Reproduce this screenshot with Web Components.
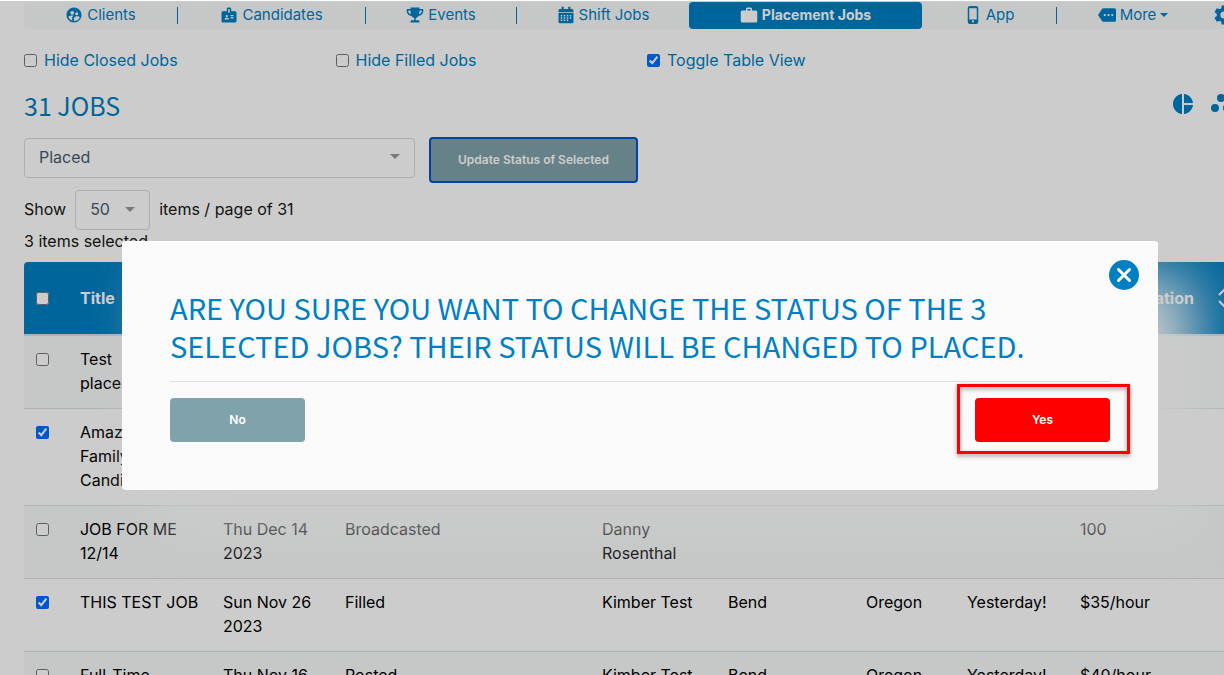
<!DOCTYPE html>
<html lang="en">
<head>
<meta charset="utf-8">
<title>Placement Jobs</title>
<style>
  body {
    margin: 0;
    height: 100vh;
    overflow: hidden;
    background: #fff;
    color: #161616;
    font: 16px/24px Inter, "Open Sans", sans-serif;
    --blue: #007fc2;
    --stripe: #f8fafb;
    --line: #dbdfe3;
    --heading: "Noto Sans CJK SC", "Noto Sans", sans-serif;
  }
</style>
</head>
<body>
<jobs-page>
  <main-nav slot="nav">
    <nav-tab icon="clients" style="--w: 154">Clients</nav-tab>
    <nav-tab icon="badge" style="--w: 188">Candidates</nav-tab>
    <nav-tab icon="trophy" style="--w: 151">Events</nav-tab>
    <nav-tab icon="calendar" plain style="--w: 172">Shift Jobs</nav-tab>
    <nav-tab icon="work" active plain style="--w: 233">Placement Jobs</nav-tab>
    <nav-tab icon="phone" style="--w: 135">App</nav-tab>
    <nav-tab icon="more" plain menu style="--w: 152">More</nav-tab>
    <nav-tab icon="gear" plain large label="Settings" style="--w: 47"></nav-tab>
  </main-nav>
  <check-option slot="filters">Hide Closed Jobs</check-option>
  <check-option slot="filters">Hide Filled Jobs</check-option>
  <check-option slot="filters" checked>Toggle Table View</check-option>
  <jobs-table></jobs-table>
</jobs-page>
<confirm-modal>
  Are you sure you want to change the status of the 3 selected jobs? Their status will be changed to Placed.
</confirm-modal>

<script>
const ICONS = {
  clients: '<path fill-rule="evenodd" d="M12 2C6.500 2 2 6.500 2 12s4.500 10 10 10 10-4.500 10-10S17.500 2 12 2zm3.600 6.300a2 2 0 1 1 0 4 2 2 0 0 1 0-4zM9.600 6.700a2.400 2.400 0 1 1 0 4.900 2.400 2.400 0 0 1 0-4.900zm0 9.200v3.800a8 8 0 0 1-5.200-5.200c1.100-1.200 3.900-1.800 5.200-1.800.5 0 1.100.1 1.700.2-1.500.8-1.700 1.800-1.700 3zM12 20v-4.100c0-1.400 2.900-2.100 4.400-2.100 1.100 0 2.900.4 3.300 1.100A8 8 0 0 1 12 20z"/>',
  badge: '<path fill-rule="evenodd" d="M20 7h-5V4c0-1.100-.9-2-2-2h-2c-1.100 0-2 .9-2 2v3H4c-1.100 0-2 .9-2 2v11c0 1.100.9 2 2 2h16c1.100 0 2-.9 2-2V9c0-1.100-.9-2-2-2zM9 12a1.500 1.500 0 1 1 0 3 1.500 1.500 0 0 1 0-3zm3 6H6v-.7c0-1 2-1.500 3-1.500s3 .5 3 1.500V18zm1-9h-2V4h2v5zm5 7.500h-4V15h4v1.500zm0-3h-4V12h4v1.500z"/>',
  trophy: '<path fill-rule="evenodd" d="M6 2v2H1v3c0 3.500 3 6 6.300 6.200A6 6 0 0 0 11 16v3H8c-1.200 0-2 .8-2 2v1h12v-1c0-1.200-.8-2-2-2h-3v-3a6 6 0 0 0 3.700-2.800C20 13 23 10.500 23 7V4h-5V2H6zM3 6h3c0 2 .2 3.700.6 4.900C4.500 10.300 3 8.800 3 7V6zm15 0h3v1c0 1.800-1.500 3.300-3.600 3.900.4-1.200.6-2.900.6-4.900z"/>',
  calendar: '<path fill-rule="evenodd" d="M6 1h3v3h6V1h3v3h2a2 2 0 0 1 2 2v2H2V6c0-1.100.9-2 2-2h2V1zM2 9h20v12a2 2 0 0 1-2 2H4a2 2 0 0 1-2-2V9zm3 3v2h2v-2H5zm4 0v2h2v-2H9zm4 0v2h2v-2h-2zm4 0v2h2v-2h-2zM5 15v2h2v-2H5zm4 0v2h2v-2H9zm4 0v2h2v-2h-2zm4 0v2h2v-2h-2zM5 18v2h2v-2H5zm4 0v2h2v-2H9zm4 0v2h2v-2h-2z"/>',
  work: '<path fill-rule="evenodd" d="M21 6h-5V4a2 2 0 0 0-2-2h-4a2 2 0 0 0-2 2v2H3a2 2 0 0 0-2 2v12c0 1.100.9 2 2 2h18a2 2 0 0 0 2-2V8a2 2 0 0 0-2-2zm-7 0h-4V4h4v2z"/>',
  phone: '<path fill-rule="evenodd" d="M8 0h8a3 3 0 0 1 3 3v18a3 3 0 0 1-3 3H8a3 3 0 0 1-3-3V3a3 3 0 0 1 3-3zM7 3v15h10V3H7zm5 16a1.300 1.300 0 1 0 0 3 1.300 1.300 0 0 0 0-3z"/>',
  more: '<path fill-rule="evenodd" d="M22 3H7c-.7 0-1.200.4-1.600.9L0 12l5.400 8.100c.4.500.9.900 1.600.900h15a2 2 0 0 0 2-2V5a2 2 0 0 0-2-2zM9 10.500a1.500 1.500 0 1 1 0 3 1.500 1.500 0 0 1 0-3zm5 0a1.500 1.500 0 1 1 0 3 1.500 1.500 0 0 1 0-3zm5 0a1.500 1.500 0 1 1 0 3 1.500 1.500 0 0 1 0-3z"/>',
  gear: '<path d="M19.140 12.940c.04-.3.06-.61.06-.94s-.02-.64-.07-.94l2.030-1.580a.49.49 0 0 0 .12-.61l-1.920-3.320a.49.49 0 0 0-.59-.22l-2.390.96c-.5-.38-1.030-.7-1.620-.94l-.36-2.540a.48.48 0 0 0-.48-.41h-3.840c-.24 0-.43.17-.47.41l-.36 2.540c-.59.24-1.130.57-1.620.94l-2.390-.96a.48.48 0 0 0-.59.22L2.740 8.870a.47.47 0 0 0 .12.61l2.030 1.580c-.05.3-.09.63-.09.94s.02.64.07.94l-2.030 1.580a.49.49 0 0 0-.12.61l1.920 3.320c.12.22.37.29.59.22l2.390-.96c.5.38 1.030.7 1.620.94l.36 2.540c.05.24.24.41.48.41h3.840c.24 0 .44-.17.47-.41l.36-2.540c.59-.24 1.130-.56 1.620-.94l2.390.96c.22.08.47 0 .59-.22l1.920-3.320a.47.47 0 0 0-.12-.61l-2.010-1.580zM12 15.600a3.600 3.600 0 1 1 0-7.200 3.600 3.600 0 0 1 0 7.200z"/>',
  pie: '<path d="M11 2v20C5.900 21.500 2 17.200 2 12s3.900-9.500 9-10zm2 0v9h9c-.5-4.700-4.200-8.500-9-9zm0 11v9c4.700-.5 8.500-4.200 9-9h-9z"/>',
  bubbles: '<circle cx="6" cy="16" r="4"/><circle cx="12" cy="6" r="4"/><circle cx="18" cy="16" r="4"/>'
};

const icon = (name, size) =>
  `<svg viewBox="0 0 24 24" width="${size}" height="${size}" fill="currentColor" aria-hidden="true">${ICONS[name]}</svg>`;

// tick boxes look the same everywhere
const CHECKBOX = `
  input[type="checkbox"] {
    width: 13px;
    height: 13px;
    margin: 0;
    flex: none;
    accent-color: #006cff;
  }
`;

class MainNav extends HTMLElement {
  connectedCallback() {
    this.attachShadow({ mode: 'open' });
    this.shadowRoot.innerHTML = `
      <style>
        :host { display: block; }
        nav {
          display: flex;
          height: 27px;
          background: var(--stripe);
          border-radius: 4px;
        }
      </style>
      <nav><slot></slot></nav>
    `;
  }
}

class NavTab extends HTMLElement {
  connectedCallback() {
    const large = this.hasAttribute('large');
    const label = this.getAttribute('label');
    this.attachShadow({ mode: 'open' });
    this.shadowRoot.innerHTML = `
      <style>
        :host {
          display: flex;
          flex: var(--w) 1 0;
          min-width: 0;
          align-items: center;
          font-size: 15px;
          color: var(--blue);
        }
        :host(:not([plain]))::after {
          content: "";
          width: 1px;
          height: 17px;
          background: currentColor;
        }
        :host([active]) {
          background: var(--blue);
          color: #fff;
          border-radius: 4px;
          font-size: 14px;
          font-weight: 700;
        }
        a {
          flex: 1;
          display: flex;
          justify-content: center;
          align-items: center;
          gap: 4px;
          padding-bottom: 1px;
          color: inherit;
          text-decoration: none;
          white-space: nowrap;
        }
        :host([large]) a { justify-content: flex-start; padding-left: 3px; }
        svg { flex: none; }
        .caret {
          border: 4px solid transparent;
          border-top-color: currentColor;
          border-bottom: 0;
        }
      </style>
      <a href="#" ${label ? `aria-label="${label}"` : ''}>
        ${icon(this.getAttribute('icon'), large ? 24 : 18)}
        <slot></slot>
        ${this.hasAttribute('menu') ? '<span class="caret"></span>' : ''}
      </a>
    `;
  }
}

class CheckOption extends HTMLElement {
  connectedCallback() {
    this.attachShadow({ mode: 'open' });
    this.shadowRoot.innerHTML = `
      <style>
        :host { display: block; color: var(--blue); }
        label { display: flex; align-items: center; gap: 7px; }
        ${CHECKBOX}
      </style>
      <label>
        <input type="checkbox" ${this.hasAttribute('checked') ? 'checked' : ''}>
        <span><slot></slot></span>
      </label>
    `;
  }
}

class SelectBox extends HTMLElement {
  connectedCallback() {
    this.attachShadow({ mode: 'open' });
    this.shadowRoot.innerHTML = `
      <style>
        :host { display: block; position: relative; }
        select {
          appearance: none;
          display: block;
          width: 100%;
          height: 40px;
          padding: 0 32px 3px 14px;
          border: 1px solid #dadada;
          border-radius: 4px;
          background: transparent;
          color: #4a5b70;
          font: inherit;
        }
        .caret {
          position: absolute;
          right: 15px;
          top: 17px;
          border: 5px solid transparent;
          border-top-color: #999;
          border-bottom: 0;
          pointer-events: none;
        }
      </style>
      <select aria-label="${this.getAttribute('label')}">
        <option>${this.getAttribute('value')}</option>
      </select>
      <span class="caret"></span>
    `;
  }
}

class JobsPage extends HTMLElement {
  connectedCallback() {
    this.attachShadow({ mode: 'open' });
    this.shadowRoot.innerHTML = `
      <style>
        /* the page is wider than the window and runs off its right side */
        :host {
          display: block;
          box-sizing: border-box;
          width: calc(100% + 56px);
          padding: 2px 24px 0;
        }
        .filters {
          display: grid;
          grid-template-columns: repeat(4, 1fr);
          gap: 14px;
          margin-top: 19px;
        }
        .heading {
          display: flex;
          justify-content: space-between;
          align-items: flex-start;
          height: 32px;
          margin-top: 17px;
          color: var(--blue);
        }
        h2 {
          margin: 0;
          font: 400 25px/32px var(--heading);
          text-transform: uppercase;
        }
        .tools { display: flex; gap: 14px; margin: 3px 23px 0 0; }
        .tools button {
          display: block;
          padding: 0;
          border: 0;
          background: none;
          color: inherit;
        }
        .tools svg { display: block; }
        .actions {
          display: flex;
          align-items: flex-start;
          gap: 14px;
          margin-top: 16px;
        }
        .status { flex: 0 1 391px; padding-top: 1px; }
        .update {
          height: 46px;
          padding: 0 27px;
          border: 2px solid #0055cc;
          border-radius: 4px;
          background: #80a2aa;
          color: #fff;
          font: 600 12px/24px Inter, sans-serif;
        }
        .paging {
          display: flex;
          align-items: center;
          gap: 9px;
          margin-top: 7px;
        }
        .size { width: 75px; }
        .paging span { padding-bottom: 2px; }
        p { margin: 0 0 10px; line-height: 22px; }
      </style>
      <slot name="nav"></slot>
      <div class="filters"><slot name="filters"></slot></div>
      <div class="heading">
        <h2>31 Jobs</h2>
        <div class="tools">
          <button type="button" aria-label="Chart">${icon('pie', 24)}</button>
          <button type="button" aria-label="Groups">${icon('bubbles', 24)}</button>
        </div>
      </div>
      <div class="actions">
        <select-box class="status" label="Status" value="Placed"></select-box>
        <button type="button" class="update">Update Status of Selected</button>
      </div>
      <div class="paging">
        <span>Show</span>
        <select-box class="size" label="Items per page" value="50"></select-box>
        <span>items / page of 31</span>
      </div>
      <p>3 items selected</p>
      <slot></slot>
    `;
  }
}

const WIDTHS = [44, 143, 122, 257, 126, 138, 101, 113, 188];

const JOBS = [
  [false, 'Test<br>placement', '', '', '', '', '', '', ''],
  [true, 'Amazing<br>Family<br>Candidate', '', '', '', '', '', '', ''],
  [false, 'JOB FOR ME<br>12/14', 'Thu Dec 14<br>2023', 'Broadcasted', 'Danny<br>Rosenthal', '', '', '', '100'],
  [true, 'THIS TEST JOB', 'Sun Nov 26<br>2023', 'Filled', 'Kimber Test', 'Bend', 'Oregon', 'Yesterday!', '$35/hour'],
  [false, 'Full-Time', 'Thu Nov 16<br>2023', 'Posted', 'Kimber Test', 'Bend', 'Oregon', 'Yesterday!', '$40/hour']
];

class JobsTable extends HTMLElement {
  connectedCallback() {
    const total = WIDTHS.reduce((a, b) => a + b);
    const rows = JOBS.map(([checked, ...cells]) => `
      <tr>
        <td><input type="checkbox" aria-label="Select job" ${checked ? 'checked' : ''}></td>
        ${cells.map(c => `<td>${c}</td>`).join('')}
      </tr>`).join('');

    this.attachShadow({ mode: 'open' });
    this.shadowRoot.innerHTML = `
      <style>
        :host { display: block; }
        table {
          width: 100%;
          table-layout: fixed;
          border-spacing: 0;
          color: #000;
        }
        th {
          height: 72px;
          padding: 0 12px;
          background: var(--blue);
          border-bottom: 2px solid var(--line);
          color: #fff;
          text-align: left;
          white-space: nowrap;
        }
        th:first-child { border-top-left-radius: 4px; }
        td {
          padding: 11px 12px 13px;
          border-bottom: 1px solid var(--line);
          vertical-align: top;
        }
        tbody tr:nth-child(odd) { background: var(--stripe); }
        ${CHECKBOX}
        input { display: block; }
        td input { margin-top: 6px !important; }
        .sort {
          display: flex;
          align-items: center;
          gap: 22px;
        }
        .sort svg { flex: none; }
      </style>
      <table>
        <colgroup>${WIDTHS.map(w => `<col style="width: ${w / total * 100}%">`).join('')}</colgroup>
        <thead>
          <tr>
            <th><input type="checkbox" aria-label="Select all"></th>
            <th>Title</th>
            <th></th><th></th><th></th><th></th><th></th><th></th>
            <th>
              <span class="sort">Compensation
                <svg width="16" height="20" viewBox="0 0 16 20" fill="none" stroke="currentColor" stroke-width="2"><path d="M3 7l5-5 5 5M3 13l5 5 5-5"/></svg>
              </span>
            </th>
          </tr>
        </thead>
        <tbody>${rows}</tbody>
      </table>
    `;
  }
}

class ConfirmModal extends HTMLElement {
  connectedCallback() {
    this.attachShadow({ mode: 'open' });
    this.shadowRoot.innerHTML = `
      <style>
        :host {
          display: block;
          position: absolute;
          inset: 1px 0 0;
          overflow: hidden;
          background: rgba(0, 0, 0, 0.2);
        }
        .wrap {
          box-sizing: border-box;
          width: calc(100% + 56px);
          padding: 240px 122px 0;
        }
        .box {
          position: relative;
          padding: 47px 48px 48px;
          border-radius: 4px;
          background: #fafafa;
          box-shadow: 35px 35px 60px #ccc, inset 0 2px 2px #fff;
        }
        h1 {
          margin: 0 0 17px;
          padding-right: 60px;
          color: var(--blue);
          font: 400 29px/38px var(--heading);
          text-transform: uppercase;
        }
        hr {
          margin: 0 0 16px;
          border: 0;
          border-top: 1px solid #dfdfdf;
        }
        .buttons { display: flex; justify-content: space-between; }
        .buttons button {
          display: block;
          width: 135px;
          height: 44px;
          border: 0;
          border-radius: 4px;
          background: #80a2aa;
          color: #fff;
          font: 600 12px/24px Inter, sans-serif;
        }
        .buttons .yes { background: #f00; }
        .marked { position: relative; }
        .marked::after {
          content: "";
          position: absolute;
          inset: -14px -20px -12px -18px;
          border: 3px solid #f00;
          filter: drop-shadow(0 2px 2px rgba(0, 0, 0, 0.4));
          pointer-events: none;
        }
        .close {
          position: absolute;
          top: 19px;
          right: 19px;
          width: 30px;
          height: 30px;
          padding: 0;
          border: 0;
          border-radius: 50%;
          background: var(--blue);
        }
        .close svg { display: block; }
      </style>
      <div class="wrap">
        <div class="box" role="dialog" aria-modal="true" aria-labelledby="question">
          <button type="button" class="close" aria-label="Close">
            <svg width="30" height="30" viewBox="0 0 30 30" stroke="#fff" stroke-width="3" stroke-linecap="round"><path d="M9.500 9.500l11 11M20.500 9.500l-11 11"/></svg>
          </button>
          <h1 id="question"><slot></slot></h1>
          <hr>
          <div class="buttons">
            <button type="button">No</button>
            <div class="marked"><button type="button" class="yes">Yes</button></div>
          </div>
        </div>
      </div>
    `;
  }
}

customElements.define('main-nav', MainNav);
customElements.define('nav-tab', NavTab);
customElements.define('check-option', CheckOption);
customElements.define('select-box', SelectBox);
customElements.define('jobs-page', JobsPage);
customElements.define('jobs-table', JobsTable);
customElements.define('confirm-modal', ConfirmModal);
</script>
</body>
</html>
